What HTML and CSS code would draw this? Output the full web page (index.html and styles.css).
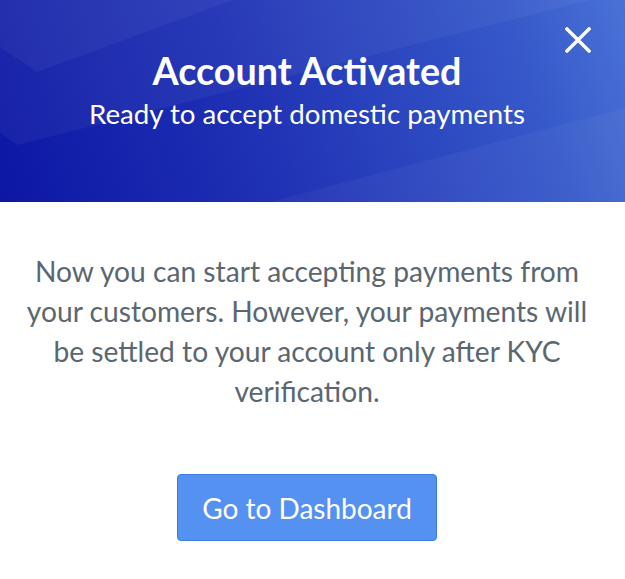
FILE: index.html
```html
<!DOCTYPE html>
<html lang="en">
<head>
<meta charset="utf-8">
<title>Account Activated</title>
<link rel="stylesheet" href="styles.css">
</head>
<body>
<div class="modal">
  <header class="hero">
    <svg class="hero-bg" viewBox="0 0 625 202" preserveAspectRatio="none" aria-hidden="true">
      <polygon points="0,0 0,133 17,145 590,0" fill="#ffffff" fill-opacity="0.045"/>
      <polygon points="0,0 0,47 37,72 233,0" fill="#ffffff" fill-opacity="0.045"/>
      <polygon points="270,202 625,108 625,202" fill="#ffffff" fill-opacity="0.04"/>
    </svg>
    <button class="close" aria-label="Close">
      <svg viewBox="0 0 26 26" width="26" height="26">
        <path d="M2 2 L24 24 M24 2 L2 24" stroke="#ffffff" stroke-width="3.4" stroke-linecap="square" fill="none"/>
      </svg>
    </button>
    <h1 class="title">Account Activated</h1>
    <p class="subtitle">Ready to accept domestic payments</p>
  </header>
  <section class="content">
    <p class="message">Now you can start accepting payments from your customers. However, your payments will be settled to your account only after KYC verification.</p>
    <button class="cta">Go to Dashboard</button>
  </section>
</div>
</body>
</html>
```

FILE: styles.css
```css
html, body {
  margin: 0;
  padding: 0;
  background: #ffffff;
}

body {
  font-family: Lato, "Noto Sans", sans-serif;
  width: 625px;
  height: 579px;
  overflow: hidden;
}

.modal {
  width: 625px;
}

.hero {
  position: relative;
  height: 202px;
  box-sizing: border-box;
  padding: 49px 11px 0 0;
  display: flex;
  flex-direction: column;
  align-items: center;
  color: #ffffff;
  background: linear-gradient(72deg, #0c17a4 0%, #1f31b4 40%, #3658c9 82%, #4a72d6 100%);
  overflow: hidden;
}

.hero-bg {
  position: absolute;
  left: 0;
  top: 0;
  width: 100%;
  height: 100%;
}

.close {
  position: absolute;
  left: 565px;
  top: 27px;
  width: 26px;
  height: 26px;
  padding: 0;
  border: 0;
  background: none;
  display: block;
}

.close svg {
  display: block;
}

.title {
  position: relative;
  margin: 0;
  font-size: 37.7px;
  line-height: 44px;
  font-weight: 700;
}

.subtitle {
  position: relative;
  margin: 5px 0 0;
  font-size: 27.7px;
  line-height: 32px;
  font-weight: 400;
}

.content {
  display: flex;
  flex-direction: column;
  align-items: center;
  padding: 49px 36px 0 25px;
}

.message {
  margin: 0;
  text-align: center;
  font-size: 28.2px;
  line-height: 40px;
  color: #5b6770;
}

.cta {
  margin-top: 63px;
  width: 260px;
  height: 67px;
  box-sizing: border-box;
  border: 1px solid #3c7be6;
  border-radius: 4px;
  background: #5591f0;
  color: #ffffff;
  font-family: Lato, "Noto Sans", sans-serif;
  font-size: 28px;
  padding: 0;
}
```
